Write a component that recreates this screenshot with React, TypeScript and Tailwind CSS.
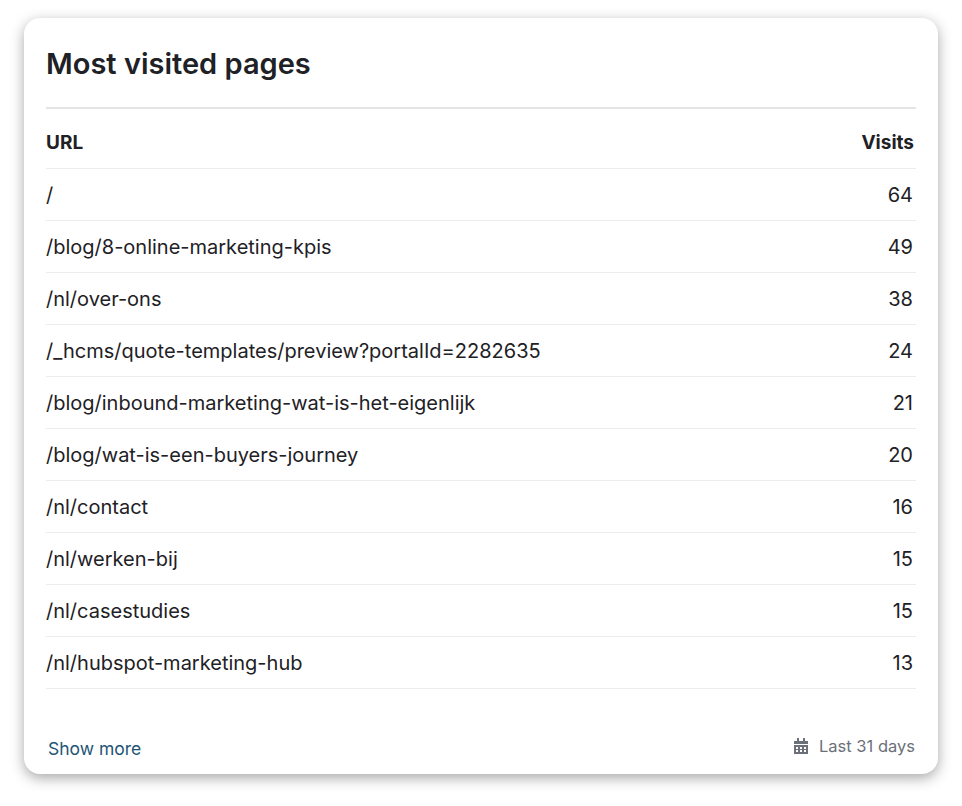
import React from "react";

const rows: [string, number][] = [
  ["/", 64],
  ["/blog/8-online-marketing-kpis", 49],
  ["/nl/over-ons", 38],
  ["/_hcms/quote-templates/preview?portalId=2282635", 24],
  ["/blog/inbound-marketing-wat-is-het-eigenlijk", 21],
  ["/blog/wat-is-een-buyers-journey", 20],
  ["/nl/contact", 16],
  ["/nl/werken-bij", 15],
  ["/nl/casestudies", 15],
  ["/nl/hubspot-marketing-hub", 13],
];

export default function App() {
  return (
    <div className="w-[962px] h-[806px] bg-white pt-[18px] pl-[24px]" style={{ fontFamily: "Inter, 'Noto Sans', sans-serif" }}>
      <div className="w-[914px] h-[756px] bg-white rounded-[16px] shadow-[0_4px_14px_rgba(0,0,0,0.35)] px-[22px] flex flex-col">
        <h1 className="text-[29px] font-semibold text-[#1e2125] pt-[24px] h-[91px] border-b-2 border-[#e4e4e4] shrink-0">Most visited pages</h1>
        <div className="flex justify-between items-center h-[60px] border-b border-[#ececec] text-[19px] font-bold text-[#1e2125] pr-[2px] pt-[10px] shrink-0">
          <span>URL</span><span>Visits</span>
        </div>
        {rows.map(([u, v], i) => (
          <div key={i} className="flex justify-between items-center h-[52px] border-b border-[#ececec] text-[20px] text-[#1e2125] pr-[3px] shrink-0">
            <span>{u}</span><span>{v}</span>
          </div>
        ))}
        <div className="flex-1 flex justify-between items-end pb-[16px]">
          <span className="text-[17.5px] text-[#1f5574] pl-[2px] leading-none pb-[1px]">Show more</span>
          <span className="flex items-center gap-[11px] text-[16.5px] text-[#6b7079] leading-none pb-[4px] pr-[1px]">
            <svg width="14" height="16" viewBox="0 0 14 16" fill="#6b7079">
              <rect x="3" y="0" width="2" height="3" />
              <rect x="9" y="0" width="2" height="3" />
              <path d="M0 3h14v3H0z" />
              <path d="M0 7h14v9H0zM2 9v2h2V9zm4 0v2h2V9zm4 0v2h2V9zM2 12v2h2v-2zm4 0v2h2v-2zm4 0v2h2v-2z" fillRule="evenodd" />
            </svg>
            Last 31 days
          </span>
        </div>
      </div>
    </div>
  );
}
